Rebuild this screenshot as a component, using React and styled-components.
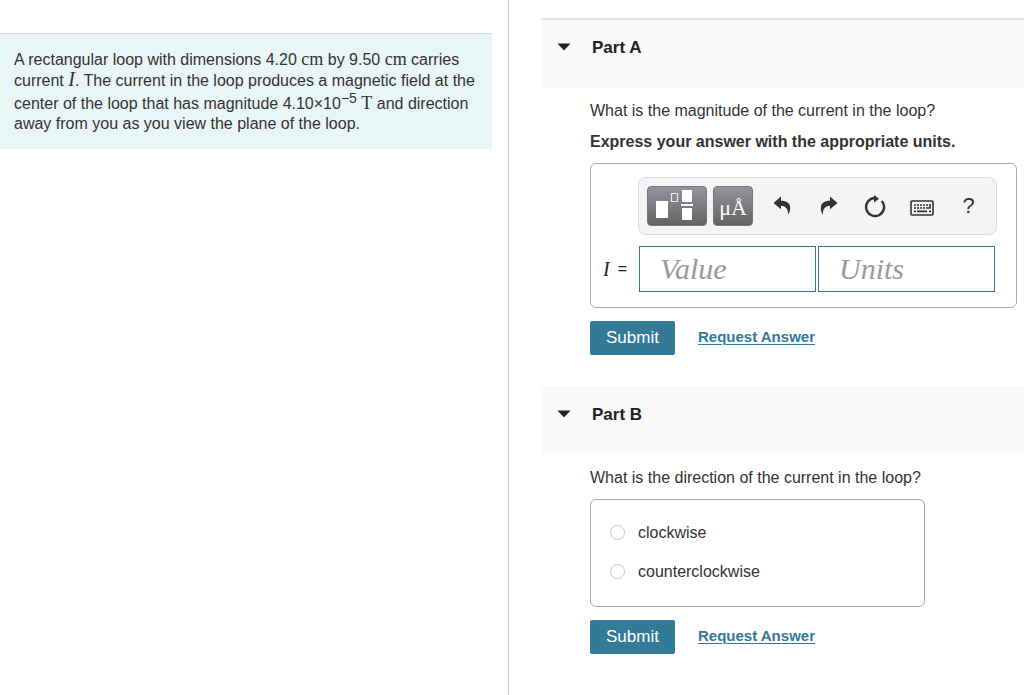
import React from "react";
import styled, { createGlobalStyle } from "styled-components";

const GlobalStyle = createGlobalStyle`
  * {
    box-sizing: border-box;
  }

  body {
    margin: 0;
    background: #fff;
    color: #333;
    font-family: "Liberation Sans", Arial, Helvetica, sans-serif;
    font-size: 16px;
    line-height: 20px;
  }
`;

const Page = styled.main`
  display: grid;
  grid-template-columns: minmax(0, 509fr) minmax(0, 515fr);
  min-height: 100vh;
`;

const ProblemPane = styled.section`
  padding: 33px 16px 0 0;
  border-right: 1px solid #b9cbdc;
`;

const Intro = styled.p`
  margin: 0;
  padding: 16px 8px 15px 14px;
  border-top: 1px solid #d5dcdb;
  background: #e8f6f5;
`;

const MathText = styled.span`
  font-family: "Liberation Serif", "Times New Roman", serif;
  font-size: ${(props) => (props.$italic ? "20px" : "18px")};
  font-style: ${(props) => (props.$italic ? "italic" : "normal")};
  line-height: 18px;
`;

const Exponent = styled.sup`
  font-size: 14px;
  line-height: 14px;
`;

const AnswerPane = styled.section`
  padding: 18px 0 32px 32px;
`;

const Part = styled.article`
  margin-bottom: 31px;
`;

const PartHeader = styled.header`
  display: flex;
  align-items: flex-start;
  height: ${(props) => (props.$first ? "70px" : "69px")};
  padding: ${(props) => (props.$first ? "18px" : "19px")} 16px 0;
  border-top: ${(props) => (props.$first ? "2px solid #e3e3e3" : "none")};
  background: #f9f9f9;
`;

const Toggle = styled.button`
  display: flex;
  align-items: center;
  width: 35px;
  height: 18px;
  padding: 0;
  border: 0;
  background: none;
  cursor: pointer;
`;

const PartTitle = styled.h2`
  margin: 0;
  color: #222;
  font-size: 17px;
  font-weight: 700;
  line-height: 20px;
`;

const PartBody = styled.div`
  padding: 13px 7px 0 49px;
`;

const Question = styled.p`
  margin: 0 0 11px;
`;

const Instruction = styled.p`
  margin: 0 0 11px;
  font-weight: 700;
`;

const AnswerBox = styled.div`
  padding: 13px 21px 15px 12px;
  border: 1px solid #a9a9a9;
  border-radius: 6px;
`;

const Toolbar = styled.div`
  display: flex;
  align-items: center;
  height: 58px;
  margin: 0 -2px 11px 35px;
  padding: 0 4px 0 8px;
  border: 1px solid #dcdcdc;
  border-radius: 8px;
  background: #f4f4f4;
`;

const PaletteButton = styled.button`
  display: flex;
  align-items: center;
  justify-content: center;
  width: ${(props) => (props.$wide ? "60px" : "40px")};
  height: 40px;
  margin-right: 6px;
  padding: ${(props) => (props.$wide ? "0" : "4px 0 0")};
  border: 1px solid #77777b;
  border-radius: 4px;
  background: linear-gradient(#95949e, #636363);
  color: #fff;
  font-family: "Liberation Serif", "Times New Roman", serif;
  font-size: 22px;
  line-height: 24px;
  cursor: pointer;
`;

const ToolButton = styled.button`
  display: flex;
  flex: 1;
  align-items: center;
  justify-content: center;
  height: 40px;
  padding: 0;
  border: 0;
  background: none;
  color: #333;
  font-family: inherit;
  font-size: 22px;
  line-height: 24px;
  cursor: pointer;
`;

const EquationRow = styled.div`
  display: flex;
  align-items: center;
  gap: 2px;
`;

const EquationLabel = styled.label`
  display: flex;
  align-items: center;
  gap: 8px;
  width: 34px;
  color: #222;
`;

const EquationInput = styled.input`
  flex: 1;
  min-width: 0;
  height: 46px;
  padding: 0 20px;
  border: 1px solid #2e7896;
  border-radius: 0;
  background: #fff;
  color: #222;
  font-family: "Liberation Serif", "Times New Roman", serif;
  font-size: 30px;
  font-style: italic;

  &::placeholder {
    color: #999;
    opacity: 1;
  }
`;

const ChoiceBox = styled.fieldset`
  display: flex;
  flex-direction: column;
  gap: 19px;
  max-width: 335px;
  height: 108px;
  margin: 0;
  padding: 23px 19px;
  border: 1px solid #a9a9a9;
  border-radius: 6px;
`;

const Choice = styled.label`
  display: flex;
  align-items: center;
  gap: 13px;
  cursor: pointer;
`;

const Radio = styled.input`
  appearance: none;
  width: 15px;
  height: 15px;
  margin: 0 0 2px;
  border: 1px solid #c6c6c6;
  border-radius: 50%;
  background: #fff;

  &:checked {
    border: 4px solid #337a99;
  }
`;

const Actions = styled.div`
  display: flex;
  align-items: flex-start;
  gap: 23px;
  margin-top: 13px;
`;

const SubmitButton = styled.button`
  width: 85px;
  height: 34px;
  padding: 0;
  border: 0;
  border-radius: 2px;
  background: #337a99;
  color: #fff;
  font-family: inherit;
  font-size: 17px;
  cursor: pointer;
`;

const RequestLink = styled.a`
  margin-top: 6px;
  color: #337a99;
  font-size: 15px;
  font-weight: 700;
  text-underline-offset: 2px;
  text-decoration-thickness: 1px;
`;

const Triangle = () => (
  <svg width="14" height="8" viewBox="0 0 14 8" aria-hidden="true">
    <path d="M0.5 0.5H13.5L7 7.5Z" fill="#222" />
  </svg>
);

const TemplateIcon = () => (
  <svg width="42" height="32" viewBox="0 0 42 32" aria-hidden="true">
    <path d="M0 11h12v17H0zM26 0h10v12H26zM26 18h10v12H26zM25 14h12v2H25z" fill="#fff" />
    <path d="M15.5 3.5h6v8h-6z" fill="none" stroke="#e8e8ea" strokeWidth="1.2" />
  </svg>
);

const UndoIcon = () => (
  <svg width="18" height="20" viewBox="0 0 18 20" aria-hidden="true">
    <path d="M0.5 7L8 0.5V4.8C13.5 4.8 17.2 7.2 17.2 12C17.2 14.5 16.6 16.5 15 18.8C15.4 14 13.5 10 8 9.8V13.2Z" fill="#333" />
  </svg>
);

const RedoIcon = () => (
  <svg width="18" height="20" viewBox="0 0 18 20" aria-hidden="true">
    <path d="M17.5 7L10 0.5V4.8C4.5 4.8 0.8 7.2 0.8 12C0.8 14.5 1.4 16.5 3 18.8C2.6 14 4.5 10 10 9.8V13.2Z" fill="#333" />
  </svg>
);

const ResetIcon = () => (
  <svg width="22" height="24" viewBox="0 0 22 24" aria-hidden="true">
    <path d="M17.8 7A9 9 0 1 1 11 4" fill="none" stroke="#333" strokeWidth="2.4" />
    <path d="M10 1L15 4.8L10 8.6Z" fill="#333" />
  </svg>
);

const KeyboardIcon = () => (
  <svg width="24" height="20" viewBox="0 -4 24 20" aria-hidden="true">
    <rect x="1" y="1" width="22" height="14" rx="1" fill="none" stroke="#333" strokeWidth="1.6" />
    <path d="M4 5H18M4 8H17" stroke="#333" strokeWidth="1.6" strokeDasharray="2 1" />
    <path d="M20 4V8H17" fill="none" stroke="#333" strokeWidth="1.6" />
    <path d="M4 11.4H6M7 11.4H17M19 11.4H21" stroke="#333" strokeWidth="1.6" />
  </svg>
);

const PartActions = () => (
  <Actions>
    <SubmitButton type="button">Submit</SubmitButton>
    <RequestLink href="#request">Request Answer</RequestLink>
  </Actions>
);

const App = () => {
  return (
    <Page>
      <GlobalStyle />
      <ProblemPane>
        <Intro>
          A rectangular loop with dimensions 4.20 <MathText>cm</MathText> by 9.50{" "}
          <MathText>cm</MathText> carries current <MathText $italic>I</MathText>. The
          current in the loop produces a magnetic field at the center of the loop that has
          magnitude 4.10×10<Exponent>−5</Exponent> <MathText>T</MathText> and direction
          away from you as you view the plane of the loop.
        </Intro>
      </ProblemPane>

      <AnswerPane>
        <Part>
          <PartHeader $first>
            <Toggle type="button" aria-label="Collapse Part A">
              <Triangle />
            </Toggle>
            <PartTitle>Part A</PartTitle>
          </PartHeader>
          <PartBody>
            <Question>What is the magnitude of the current in the loop?</Question>
            <Instruction>Express your answer with the appropriate units.</Instruction>
            <AnswerBox>
              <Toolbar>
                <PaletteButton type="button" $wide aria-label="Templates">
                  <TemplateIcon />
                </PaletteButton>
                <PaletteButton type="button">μÅ</PaletteButton>
                <ToolButton type="button" aria-label="Undo">
                  <UndoIcon />
                </ToolButton>
                <ToolButton type="button" aria-label="Redo">
                  <RedoIcon />
                </ToolButton>
                <ToolButton type="button" aria-label="Reset">
                  <ResetIcon />
                </ToolButton>
                <ToolButton type="button" aria-label="Keyboard shortcuts">
                  <KeyboardIcon />
                </ToolButton>
                <ToolButton type="button">?</ToolButton>
              </Toolbar>
              <EquationRow>
                <EquationLabel htmlFor="value">
                  <MathText $italic>I</MathText> =
                </EquationLabel>
                <EquationInput id="value" placeholder="Value" />
                <EquationInput aria-label="Units" placeholder="Units" />
              </EquationRow>
            </AnswerBox>
            <PartActions />
          </PartBody>
        </Part>

        <Part>
          <PartHeader>
            <Toggle type="button" aria-label="Collapse Part B">
              <Triangle />
            </Toggle>
            <PartTitle>Part B</PartTitle>
          </PartHeader>
          <PartBody>
            <Question>What is the direction of the current in the loop?</Question>
            <ChoiceBox aria-label="Direction of the current">
              <Choice>
                <Radio type="radio" name="direction" value="clockwise" />
                clockwise
              </Choice>
              <Choice>
                <Radio type="radio" name="direction" value="counterclockwise" />
                counterclockwise
              </Choice>
            </ChoiceBox>
            <PartActions />
          </PartBody>
        </Part>
      </AnswerPane>
    </Page>
  );
};

export default App;
